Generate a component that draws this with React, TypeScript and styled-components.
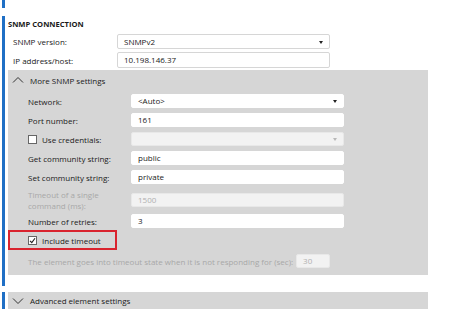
import styled, { createGlobalStyle } from "styled-components";

const GlobalStyle = createGlobalStyle`
  html, body {
    margin: 0;
    padding: 0;
    background: #ffffff;
  }
  body {
    font-family: "Open Sans", "Noto Sans", sans-serif;
    font-size: 8px;
    color: #1a1a1a;
  }
`;

const Page = styled.div`
  width: 474px;
  height: 333px;
  overflow: hidden;
`;

const Section = styled.div<{ $h?: number; $top?: number }>`
  margin-left: 2px;
  margin-top: ${(p) => p.$top ?? 0}px;
  width: 420px;
  border-left: 3px solid #1f6fc5;
  padding: 0 0 0 3px;
  ${(p) => (p.$h ? `height: ${p.$h}px;` : "")}
`;

const Heading = styled.div`
  font-weight: 700;
  font-size: 7.6px;
  line-height: 12px;
  padding-top: 2px;
  color: #1a1a1a;
`;

const Rows = styled.div<{ $gap: number; $indent: number }>`
  display: flex;
  flex-direction: column;
  gap: ${(p) => p.$gap}px;
  padding-left: ${(p) => p.$indent}px;
`;

const FieldRow = styled.div<{ $label: number }>`
  display: grid;
  grid-template-columns: ${(p) => p.$label}px 213px;
  align-items: center;
`;

const Label = styled.div<{ $disabled?: boolean }>`
  line-height: 11px;
  color: ${(p) => (p.$disabled ? "#a8a8a8" : "#1a1a1a")};
`;

const Field = styled.div<{ $h: number; $disabled?: boolean; $bordered?: boolean }>`
  position: relative;
  height: ${(p) => p.$h}px;
  box-sizing: border-box;
  border-radius: 2px;
  border: 1px solid ${(p) => (p.$bordered ? "#d6d6d6" : p.$disabled ? "#e8e8e8" : "#ffffff")};
  background: ${(p) => (p.$disabled ? "#f2f2f2" : "#ffffff")};
  color: ${(p) => (p.$disabled ? "#b0b0b0" : "#1a1a1a")};
  display: flex;
  align-items: center;
  padding-left: 6px;
  line-height: 1;
`;

const Caret = styled.span<{ $disabled?: boolean }>`
  position: absolute;
  right: 6px;
  top: 50%;
  margin-top: -1px;
  width: 0;
  height: 0;
  border-left: 2.5px solid transparent;
  border-right: 2.5px solid transparent;
  border-top: 3px solid ${(p) => (p.$disabled ? "#b8b8b8" : "#222222")};
`;

const Panel = styled.div`
  background: #d6d6d6;
  margin-top: 2px;
  padding-bottom: 7px;
`;

const Bar = styled.div`
  display: flex;
  align-items: center;
  gap: 6px;
  padding-left: 4px;
  height: 20px;
  color: #1a1a1a;
`;

const Chevron = ({ up }: { up?: boolean }) => (
  <svg width="12" height="8" viewBox="0 0 12 8">
    <path
      d={up ? "M1 6.5 L6 1.5 L11 6.5" : "M1 1.5 L6 6.5 L11 1.5"}
      fill="none"
      stroke="#333333"
      strokeWidth="1"
    />
  </svg>
);

const Check = styled.span`
  width: 9px;
  height: 9px;
  box-sizing: border-box;
  border: 1px solid #666666;
  background: #ffffff;
  display: inline-flex;
  align-items: center;
  justify-content: center;
  margin-right: 5px;
`;

const CheckLabel = styled.div`
  display: flex;
  align-items: center;
  line-height: 11px;
`;

const Highlight = styled.div`
  margin-left: -20px;
  width: 109px;
  height: 20px;
  box-sizing: border-box;
  border: 2px solid #d9232e;
  padding-left: 18px;
  display: flex;
  align-items: center;
`;

const TimeoutRow = styled.div`
  display: flex;
  align-items: center;
  gap: 3px;
  margin-top: -1px;
`;

const SmallField = styled(Field)`
  width: 34px;
`;

const AdvBar = styled(Bar)`
  height: 17px;
  background: #d6d6d6;
  margin: 3px 0;
`;

const CheckMark = () => (
  <svg width="7" height="7" viewBox="0 0 7 7">
    <path d="M1 3.8 L2.8 5.6 L6 1.2" fill="none" stroke="#222222" strokeWidth="1.1" />
  </svg>
);

export default function App() {
  return (
    <Page>
      <GlobalStyle />
      <Section $h={8} />
      <Section $top={8}>
        <Heading>SNMP CONNECTION</Heading>
        <Rows $gap={3} $indent={5} style={{ marginTop: 4 }}>
          <FieldRow $label={104}>
            <Label>SNMP version:</Label>
            <Field $h={15} $bordered>
              SNMPv2
              <Caret />
            </Field>
          </FieldRow>
          <FieldRow $label={104}>
            <Label>IP address/host:</Label>
            <Field $h={16} $bordered>10.198.146.37</Field>
          </FieldRow>
        </Rows>
        <Panel>
          <Bar>
            <Chevron up />
            <span>More SNMP settings</span>
          </Bar>
          <Rows $gap={5} $indent={20} style={{ marginTop: 4 }}>
            <FieldRow $label={103}>
              <Label>Network:</Label>
              <Field $h={14}>
                &lt;Auto&gt;
                <Caret />
              </Field>
            </FieldRow>
            <FieldRow $label={103}>
              <Label>Port number:</Label>
              <Field $h={14}>161</Field>
            </FieldRow>
            <FieldRow $label={103}>
              <CheckLabel>
                <Check />
                Use credentials:
              </CheckLabel>
              <Field $h={14} $disabled>
                <Caret $disabled />
              </Field>
            </FieldRow>
            <FieldRow $label={103}>
              <Label>Get community string:</Label>
              <Field $h={14}>public</Field>
            </FieldRow>
            <FieldRow $label={103}>
              <Label>Set community string:</Label>
              <Field $h={14}>private</Field>
            </FieldRow>
            <FieldRow $label={103}>
              <Label $disabled>
                Timeout of a single
                <br />
                command (ms):
              </Label>
              <Field $h={14} $disabled>1500</Field>
            </FieldRow>
            <FieldRow $label={103} style={{ marginTop: -2 }}>
              <Label>Number of retries:</Label>
              <Field $h={14}>3</Field>
            </FieldRow>
            <Highlight style={{ marginTop: -3 }}>
              <CheckLabel>
                <Check>
                  <CheckMark />
                </Check>
                Include timeout
              </CheckLabel>
            </Highlight>
            <TimeoutRow>
              <Label $disabled>
                The element goes into timeout state when it is not responding for (sec):
              </Label>
              <SmallField $h={14} $disabled>30</SmallField>
            </TimeoutRow>
          </Rows>
        </Panel>
        <div style={{ height: 11 }} />
      </Section>
      <Section $top={6}>
        <AdvBar>
          <Chevron />
          <span>Advanced element settings</span>
        </AdvBar>
      </Section>
    </Page>
  );
}
